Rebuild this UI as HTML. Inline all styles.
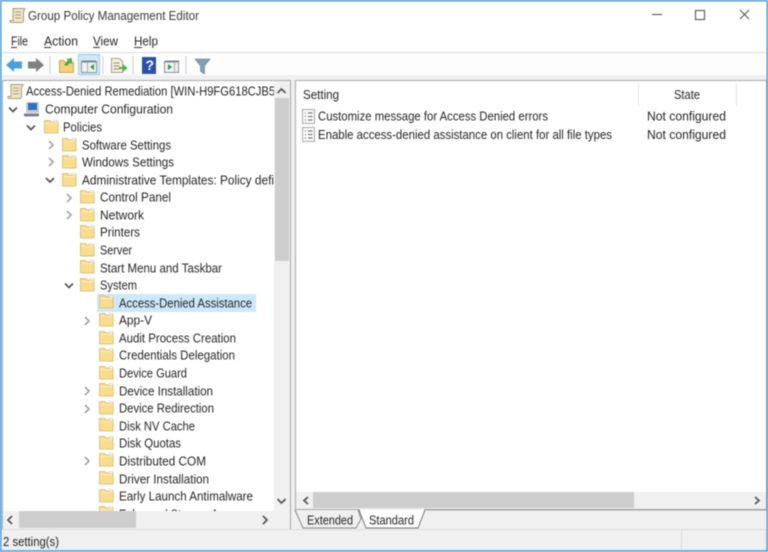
<!DOCTYPE html>
<html><head><meta charset="utf-8"><style>
html,body{margin:0;padding:0;background:#fff;overflow:hidden}
svg{display:block;width:768px;height:552px;filter:blur(.4px)}
text{font-family:"Liberation Sans",sans-serif;font-size:12.5px;fill:#262626}
.tr text{transform:translateY(.5px)}
</style></head><body>
<svg xmlns="http://www.w3.org/2000/svg" width="768" height="552" viewBox="0 0 768 552">
<defs>
<g id="f"><path d="M.5 1.500h5l1.500 1.500h7v11H.5z" fill="#f9dc8c" stroke="#e0c27a"/><path d="M1.500 4.500h12" stroke="#fdeebd"/><path d="M10 1.500h4v2h-4z" fill="#f2f2f2" stroke="#d0c8b0" stroke-width=".6"/></g>
<path id="e" d="M-4-2 0 2 4-2" fill="none" stroke="#555" stroke-width="1.700"/>
<path id="c" d="M-2-4 2 0-2 4" fill="none" stroke="#a6a6a6" stroke-width="1.700"/>
<g id="p"><rect x=".5" y=".5" width="12" height="14" fill="#f8f8f8" stroke="#a8a8a8"/><path d="M3 4h1M3 7.500h1M3 11h1M6 4h4.500M6 7.500h4.500M6 11h4.500" stroke="#666"/></g>
<g id="s"><path d="M4 1.500h12l-1.500 3v9q0 2-2 2H2q-1.500-.5-1-2h3z" fill="#efe4c4" stroke="#a89c7e"/><path d="M6 5h6M6 8h6M6 11h6" stroke="#a89f86"/></g>
<clipPath id="t"><rect x="3" y="82" width="271" height="429"/></clipPath>
</defs>
<rect width="768" height="552" fill="#fff"/>
<rect y="53" width="768" height="499" fill="#f0f0f0"/>
<rect y="53" width="768" height="22" fill="#fdfdfd"/>
<rect y="52" width="768" height="1" fill="#dcdcdc"/>

<use href="#s" x="9" y="7"/>
<text x="28" y="20" textLength="171" lengthAdjust="spacingAndGlyphs" style="fill:#3a3a3a">Group Policy Management Editor</text>
<path d="M652 14.500h10" stroke="#444"/>
<rect x="695.500" y="10.500" width="9" height="9" fill="none" stroke="#555" stroke-width="1.100"/>
<path d="M740 10 749 19M749 10 740 19" stroke="#555" stroke-width="1.100"/>

<text x="11" y="45.500" textLength="17" lengthAdjust="spacingAndGlyphs">File</text><path d="M11 47.500h6" stroke="#333"/>
<text x="44" y="45.500" textLength="34" lengthAdjust="spacingAndGlyphs">Action</text><path d="M44 47.500h7" stroke="#333"/>
<text x="93" y="45.500" textLength="25" lengthAdjust="spacingAndGlyphs">View</text><path d="M93 47.500h7" stroke="#333"/>
<text x="134" y="45.500" textLength="24" lengthAdjust="spacingAndGlyphs">Help</text><path d="M134 47.500h8" stroke="#333"/>

<path d="M6 65 14 58v3.500h8v7h-8V72z" fill="#4a9fe0"/>
<path d="M44 65 36 58v3.500h-8v7h8V72z" fill="#808080"/>
<path d="M50 56v18M103 56v18M133 56v18M186 56v18" stroke="#cfcfcf"/>
<path d="M59.500 60.500h4l2 2h8v10h-14z" fill="#f4d27c" stroke="#cfa850"/><path d="M64 65 68 60l-2-1 6-1v6l-2-1-3 3z" fill="#4fae3c"/>
<rect x="78.500" y="54.500" width="21" height="20" fill="#d3e8f6" stroke="#9accea"/>
<rect x="81.500" y="61.500" width="15" height="11" fill="#f0f0f0" stroke="#8b959c"/><path d="M82 61.500h14" stroke="#7b868e" stroke-width="2"/><path d="M87.500 62v10" stroke="#aab"/><path d="M94 64v6l-4-3z" fill="#2f9a45"/>
<path d="M111.500 58.500h8l3 3v11h-11z" fill="#f7f1dc" stroke="#a9a28d"/><path d="M113.500 63h6M113.500 66h6M113.500 69h6" stroke="#8f8a78"/><path d="M119 67h4v-3l4.500 4-4.500 4v-3h-4z" fill="#49b64c"/>
<rect x="142" y="57" width="14" height="17" fill="#2b50a8"/><text x="145.500" y="70" font-weight="700" style="font-size:14px;fill:#fff">?</text>
<rect x="164.500" y="61.500" width="14" height="11" fill="#f0f0f0" stroke="#8b959c"/><path d="M165 61.500h14" stroke="#7b868e" stroke-width="2"/><path d="M174.500 62v10" stroke="#aab"/><path d="M168 64v6l4-3z" fill="#2f9a45"/>
<path d="M195 59h15l-5.500 7v8l-4-2.500V66z" fill="#7fa0b8" stroke="#5f7f96" stroke-width=".6"/>

<rect x="2.500" y="80.500" width="288" height="449" fill="#fff" stroke="#a8a8a8"/>
<rect x="295.500" y="80.500" width="471" height="429" fill="#fff" stroke="#a8a8a8"/>

<rect x="97" y="294" width="159" height="18" fill="#cde8fb"/>
<g clip-path="url(#t)" class="tr">
<use href="#s" x="7" y="83"/>
<text x="26" y="95" textLength="374" lengthAdjust="spacingAndGlyphs">Access-Denied Remediation [WIN-H9FG618CJB5.CONTOSO.COM] Policy</text>
<rect x="26" y="102" width="13" height="11" fill="#c8ccd2"/><rect x="28" y="103" width="9" height="7" fill="#2f6fc4"/><path d="M24 115h15" stroke="#7d8288" stroke-width="3"/>
<text x="45" y="113" textLength="128" lengthAdjust="spacingAndGlyphs">Computer Configuration</text>
<use href="#f" x="44" y="119"/><text x="63" y="131" textLength="39" lengthAdjust="spacingAndGlyphs">Policies</text>
<use href="#f" x="62" y="137"/><text x="82" y="149" textLength="89" lengthAdjust="spacingAndGlyphs">Software Settings</text>
<use href="#f" x="62" y="154"/><text x="82" y="166" textLength="92" lengthAdjust="spacingAndGlyphs">Windows Settings</text>
<use href="#f" x="62" y="172"/><text x="82" y="184" textLength="192" lengthAdjust="spacingAndGlyphs">Administrative Templates: Policy defi</text>
<use href="#f" x="80" y="189"/><text x="100" y="201" textLength="71" lengthAdjust="spacingAndGlyphs">Control Panel</text>
<use href="#f" x="80" y="207"/><text x="100" y="219" textLength="44" lengthAdjust="spacingAndGlyphs">Network</text>
<use href="#f" x="80" y="224"/><text x="100" y="236" textLength="40" lengthAdjust="spacingAndGlyphs">Printers</text>
<use href="#f" x="80" y="242"/><text x="100" y="254" textLength="32" lengthAdjust="spacingAndGlyphs">Server</text>
<use href="#f" x="80" y="259"/><text x="100" y="272" textLength="122" lengthAdjust="spacingAndGlyphs">Start Menu and Taskbar</text>
<use href="#f" x="80" y="277"/><text x="100" y="289" textLength="37" lengthAdjust="spacingAndGlyphs">System</text>
<use href="#f" x="99" y="294"/><text x="119" y="307" textLength="133" lengthAdjust="spacingAndGlyphs">Access-Denied Assistance</text>
<use href="#f" x="99" y="312"/><text x="119" y="324" textLength="33" lengthAdjust="spacingAndGlyphs">App-V</text>
<use href="#f" x="99" y="330"/><text x="119" y="342" textLength="117" lengthAdjust="spacingAndGlyphs">Audit Process Creation</text>
<use href="#f" x="99" y="347"/><text x="119" y="359" textLength="116" lengthAdjust="spacingAndGlyphs">Credentials Delegation</text>
<use href="#f" x="99" y="365"/><text x="119" y="377" textLength="68" lengthAdjust="spacingAndGlyphs">Device Guard</text>
<use href="#f" x="99" y="382"/><text x="119" y="395" textLength="94" lengthAdjust="spacingAndGlyphs">Device Installation</text>
<use href="#f" x="99" y="400"/><text x="119" y="412" textLength="95" lengthAdjust="spacingAndGlyphs">Device Redirection</text>
<use href="#f" x="99" y="417"/><text x="119" y="430" textLength="76" lengthAdjust="spacingAndGlyphs">Disk NV Cache</text>
<use href="#f" x="99" y="435"/><text x="119" y="447" textLength="62" lengthAdjust="spacingAndGlyphs">Disk Quotas</text>
<use href="#f" x="99" y="452"/><text x="119" y="465" textLength="87" lengthAdjust="spacingAndGlyphs">Distributed COM</text>
<use href="#f" x="99" y="470"/><text x="119" y="483" textLength="90" lengthAdjust="spacingAndGlyphs">Driver Installation</text>
<use href="#f" x="99" y="488"/><text x="119" y="500" textLength="134" lengthAdjust="spacingAndGlyphs">Early Launch Antimalware</text>
<use href="#f" x="99" y="505"/><text x="119" y="518" textLength="127" lengthAdjust="spacingAndGlyphs">Enhanced Storage Access</text>
</g>
<use href="#e" x="13" y="109.500"/><use href="#e" x="31" y="127.500"/><use href="#e" x="50" y="180"/><use href="#e" x="69" y="285.500"/>
<use href="#c" x="51" y="145"/><use href="#c" x="51" y="162"/><use href="#c" x="69" y="198"/><use href="#c" x="69" y="215"/>
<use href="#c" x="87" y="321"/><use href="#c" x="87" y="391"/><use href="#c" x="87" y="409"/><use href="#c" x="87" y="461"/>

<rect x="274" y="81" width="16" height="430" fill="#f0f0f0"/>
<rect x="275" y="98" width="14" height="163" fill="#cdcdcd"/>
<path d="M277.500 93 281.500 89 285.500 93M277.500 499 281.500 503 285.500 499" fill="none" stroke="#555" stroke-width="1.700"/>
<rect x="3" y="511" width="287" height="18" fill="#f0f0f0"/>
<rect x="19" y="511" width="117" height="17" fill="#cdcdcd"/>
<path d="M12 516 8 520 12 524M263 516 267 520 263 524" fill="none" stroke="#555" stroke-width="1.700"/>

<text x="303" y="99" textLength="36" lengthAdjust="spacingAndGlyphs">Setting</text>
<text x="674" y="99" textLength="26" lengthAdjust="spacingAndGlyphs">State</text>
<path d="M638.500 83v23M736.500 83v23" stroke="#e5e5e5"/>
<use href="#p" x="302" y="109"/><text x="318" y="120.500" textLength="230" lengthAdjust="spacingAndGlyphs">Customize message for Access Denied errors</text>
<text x="647" y="120.500" textLength="79" lengthAdjust="spacingAndGlyphs">Not configured</text>
<use href="#p" x="302" y="127"/><text x="318" y="139" textLength="294" lengthAdjust="spacingAndGlyphs">Enable access-denied assistance on client for all file types</text>
<text x="647" y="139" textLength="79" lengthAdjust="spacingAndGlyphs">Not configured</text>

<rect x="296" y="492" width="470" height="17" fill="#f0f0f0"/>
<rect x="313" y="492" width="321" height="16" fill="#cdcdcd"/>
<path d="M308 497 304 500.500 308 504M755 497 759 500.500 755 504" fill="none" stroke="#555" stroke-width="1.700"/>

<path d="M295 510H768" stroke="#a0a0a0"/>
<path d="M295 510 303 528H356L361 519 358 510" fill="#f0f0f0" stroke="#8a8a8a"/>
<path d="M359 510 366 528H418L425 510" fill="#fff" stroke="#777"/>
<path d="M360 510H424" stroke="#fff" stroke-width="1.500"/>
<text x="307" y="524.500" textLength="46" lengthAdjust="spacingAndGlyphs">Extended</text>
<text x="369" y="524.500" textLength="45" lengthAdjust="spacingAndGlyphs">Standard</text>

<rect y="530" width="768" height="21" fill="#f0f0f0"/>
<path d="M0 529.500h768" stroke="#dcdcdc"/><path d="M681.500 530v20" stroke="#dedede"/><path d="M765.500 530v20" stroke="#dedede"/>
<text x="3" y="546" textLength="56" lengthAdjust="spacingAndGlyphs">2 setting(s)</text>

<path d="M.75 552V.75H767.250V552M0 551H768" fill="none" stroke="#4a9bd9" stroke-width="1.500"/>
</svg>
</body></html>
